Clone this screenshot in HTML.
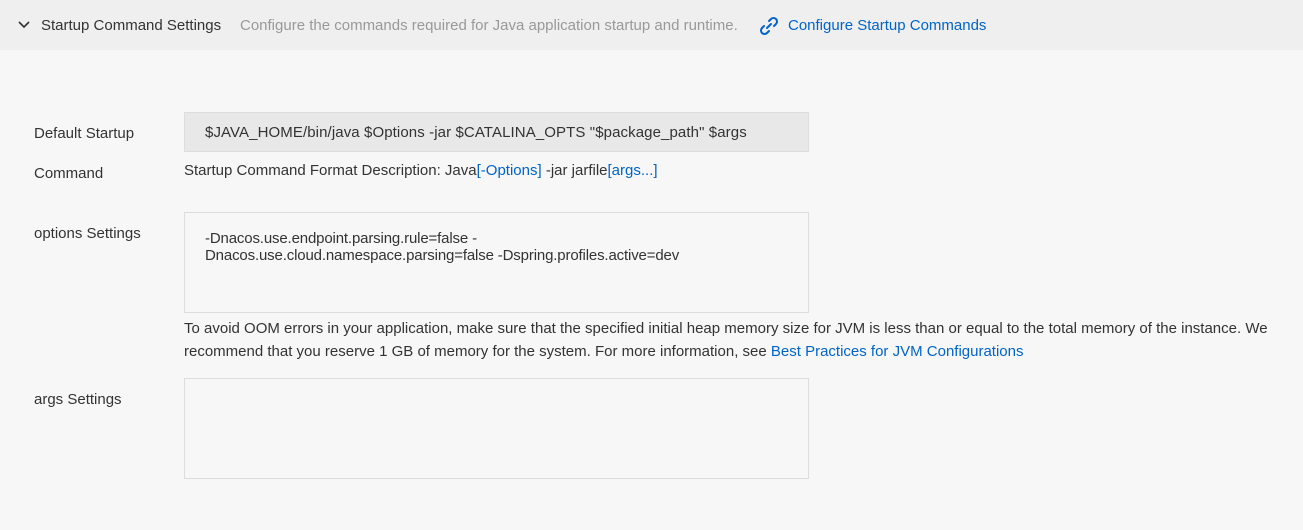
<!DOCTYPE html>
<html><head><meta charset="utf-8"><style>
body{margin:0;width:1303px;height:530px;background:#f7f7f7;font-family:"Liberation Sans",sans-serif;font-size:15px;color:#333;position:relative;overflow:hidden}
.hd{position:absolute;left:0;top:0;width:1303px;height:50px;background:#efefef}
.a{position:absolute;white-space:nowrap}
.blue{color:#0064c8}
.box{position:absolute;border:1px solid #ddd;background:#f7f7f7;box-sizing:border-box}
</style></head><body>
<div class="hd">
<svg class="a" style="left:17px;top:20px" width="14" height="10" viewBox="0 0 14 10"><path d="M2 2l5 5 5-5" fill="none" stroke="#333" stroke-width="1.6"/></svg>
<div class="a" style="left:41px;top:17px;color:#333">Startup Command Settings</div>
<div class="a" style="left:240px;top:17px;color:#999">Configure the commands required for Java application startup and runtime.</div>
<svg class="a" style="left:758px;top:15px" width="22" height="22" viewBox="0 0 22 22"><g fill="none" stroke="#0064c8" stroke-width="2" stroke-linecap="round"><path d="M9 13l4-4"/><path d="M11 6l2-2a3.5 3.5 0 0 1 5 5l-2 2"/><path d="M11 16l-2 2a3.5 3.5 0 0 1-5-5l2-2"/></g></svg>
<div class="a blue" style="left:788px;top:17px">Configure Startup Commands</div>
</div>
<div class="a" style="left:34px;top:125px">Default Startup</div>
<div class="a" style="left:34px;top:165px">Command</div>
<div class="box" style="left:184px;top:112px;width:625px;height:40px;background:#e8e8e8"></div>
<div class="a" style="left:205px;top:124px;letter-spacing:0.1px">$JAVA_HOME/bin/java $Options -jar $CATALINA_OPTS "$package_path" $args</div>
<div class="a" style="left:184px;top:162px">Startup Command Format Description: Java<span class="blue">[-Options]</span> -jar jarfile<span class="blue">[args...]</span></div>
<div class="a" style="left:34px;top:225px">options Settings</div>
<div class="box" style="left:184px;top:212px;width:625px;height:101px"></div>
<div class="a" style="left:205px;top:230px;line-height:17px;letter-spacing:-0.15px">-Dnacos.use.endpoint.parsing.rule=false -<br>Dnacos.use.cloud.namespace.parsing=false -Dspring.profiles.active=dev</div>
<div class="a" style="left:184px;top:317px;line-height:23px">To avoid OOM errors in your application, make sure that the specified initial heap memory size for JVM is less than or equal to the total memory of the instance. We<br>recommend that you reserve 1 GB of memory for the system. For more information, see <span class="blue">Best Practices for JVM Configurations</span></div>
<div class="a" style="left:34px;top:391px">args Settings</div>
<div class="box" style="left:184px;top:378px;width:625px;height:101px"></div>
</body></html>
